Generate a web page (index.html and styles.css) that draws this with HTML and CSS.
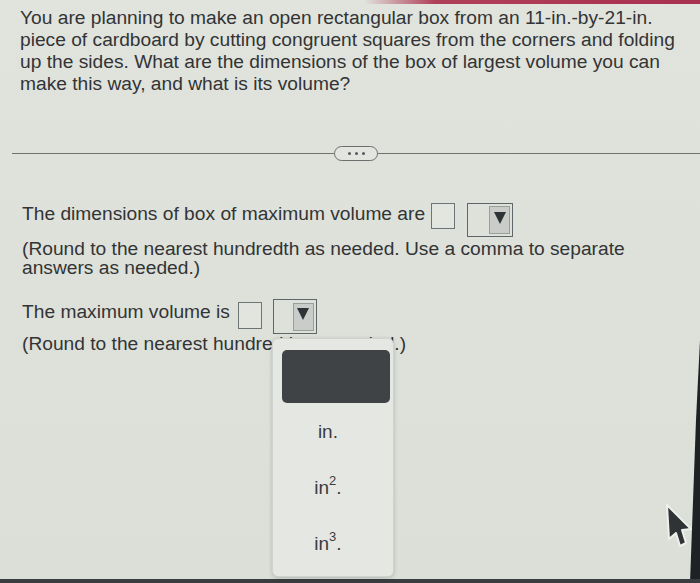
FILE: index.html
```html
<!DOCTYPE html>
<html>
<head>
<meta charset="utf-8">
<link rel="stylesheet" href="styles.css">
</head>
<body>
<div class="screen">
  <div class="topband"></div>
  <p class="question">You are planning to make an open rectangular box from an 11-in.-by-21-in. piece of cardboard by cutting congruent squares from the corners and folding up the sides. What are the dimensions of the box of largest volume you can make this way, and what is its volume?</p>

  <div class="divider">
    <span class="rule"></span>
    <span class="more"><i></i><i></i><i></i></span>
    <span class="rule"></span>
  </div>

  <div class="answers">
    <div class="row row-one">
      <span class="label">The dimensions of box of maximum volume are</span>
      <span class="box"></span>
      <span class="select"><span class="btn"><span class="tri"></span></span></span>
    </div>
    <p class="note">(Round to the nearest hundredth as needed. Use a comma to separate answers as needed.)</p>

    <div class="row row-two">
      <span class="label">The maximum volume is</span>
      <span class="box"></span>
      <span class="select anchor"><span class="btn"><span class="tri"></span></span>
        <span class="menu">
          <span class="menu-head"></span>
          <span class="opt">in.</span>
          <span class="opt">in<sup>2</sup>.</span>
          <span class="opt">in<sup>3</sup>.</span>
        </span>
      </span>
    </div>
    <p class="note note-two">(Round to the nearest hundredth as needed.)</p>
  </div>

  <svg class="cursor" width="30" height="46" viewBox="0 0 30 46">
    <path d="M3 2 L27 26 L18 27 L22 40 L16 43 L12 30 L5 36 Z" fill="#2f3336" stroke="#eef0ec" stroke-width="2" stroke-linejoin="round"/>
  </svg>
  <svg class="edge" width="14" height="583" viewBox="0 0 14 583">
    <polygon points="14,340 14,583 4,583 10,420" fill="#1f2224"/>
  </svg>
  <div class="bottomband"></div>
</div>
</body>
</html>
```
FILE: styles.css
```css
html, body {
  margin: 0;
  padding: 0;
}
body {
  width: 700px;
  height: 583px;
  overflow: hidden;
  background: #dfe2db;
  font-family: "Liberation Sans", Arial, sans-serif;
  color: #323435;
}
.screen {
  position: relative;
  width: 700px;
  height: 583px;
  background: linear-gradient(180deg, #e1e3dd 0%, #dde1da 50%, #dcdfd8 100%);
  overflow: hidden;
}
.topband {
  height: 4px;
  background: linear-gradient(90deg, rgba(176,48,80,0) 0%, rgba(176,48,80,0) 52%, #b0405a 62%, #a83050 100%);
}
.question {
  margin: 3px 0 0 0;
  padding: 0 4px 0 20px;
  font-size: 19.2px;
  line-height: 22px;
}
.divider {
  display: flex;
  align-items: center;
  margin: 50px 0 0 12px;
  height: 16px;
}
.rule {
  flex: 1;
  height: 1px;
  background: #6e7270;
}
.more {
  display: flex;
  align-items: center;
  justify-content: center;
  gap: 4px;
  width: 42px;
  height: 13px;
  border: 1.5px solid #6b6f6e;
  border-radius: 8px;
  background: #e3e5e0;
}
.more i {
  width: 3px;
  height: 3px;
  border-radius: 50%;
  background: #555a5c;
}
.answers {
  padding-left: 22px;
  margin-top: 41px;
}
.row {
  display: flex;
  align-items: flex-start;
  font-size: 19.2px;
}
.label {
  line-height: 22px;
  margin-top: 1px;
}
.box {
  width: 22px;
  height: 24px;
  border: 1px solid #6d7476;
  margin-left: 6px;
  margin-top: 1px;
  background: rgba(255,255,255,0.15);
}
.select {
  position: relative;
  width: 46px;
  height: 34px;
  border: 1px solid #5f666a;
  margin-left: 12px;
  margin-top: 1px;
  display: flex;
  justify-content: flex-end;
  align-items: center;
  box-sizing: border-box;
  padding-right: 2px;
}
.btn {
  width: 21px;
  height: 28px;
  background: #c9ccc8;
  border: 1px solid #9a9e9c;
  box-sizing: border-box;
  display: flex;
  align-items: center;
  justify-content: center;
}
.tri {
  width: 0;
  height: 0;
  border-left: 6px solid transparent;
  border-right: 6px solid transparent;
  border-top: 12px solid #2e3336;
  margin-top: -5px;
}
.note {
  margin: 2px 0 0 0;
  font-size: 19.2px;
  line-height: 19px;
  width: 630px;
}
.row-two {
  margin-top: 23px;
}
.row-two .box {
  margin-left: 8px;
  margin-top: 2px;
  height: 25px;
}
.row-two .select {
  margin-left: 11px;
  margin-top: -1px;
  width: 44px;
  height: 35px;
}
.note-two {
  margin-top: 0;
  line-height: 20px;
}
.menu {
  position: absolute;
  left: -2px;
  top: 38px;
  width: 122px;
  height: 239px;
  box-sizing: border-box;
  background: #e5e7e3;
  border: 1px solid #cfd2ce;
  border-radius: 6px;
  box-shadow: 0 1px 4px rgba(0,0,0,0.18);
  display: flex;
  flex-direction: column;
  align-items: center;
  padding: 11px 3px 0 9px;
  z-index: 2;
}
.menu-head {
  flex-shrink: 0;
  align-self: stretch;
  height: 53px;
  background: #3f4346;
  border-radius: 5px;
  margin-bottom: 18px;
}
.opt {
  flex-shrink: 0;
  font-size: 19px;
  line-height: 22px;
  height: 56px;
  color: #3a3c3d;
  margin-left: -16px;
}
.opt:last-child {
  height: 40px;
}
.opt sup {
  font-size: 13px;
  line-height: 0;
  vertical-align: 0;
  position: relative;
  top: -9px;
}
.cursor {
  position: absolute;
  left: 664px;
  top: 503px;
}
.edge {
  position: absolute;
  right: 0;
  top: 0;
}
.bottomband {
  position: absolute;
  left: 0;
  right: 0;
  bottom: 0;
  height: 4px;
  background: #3a3d3f;
}
```
